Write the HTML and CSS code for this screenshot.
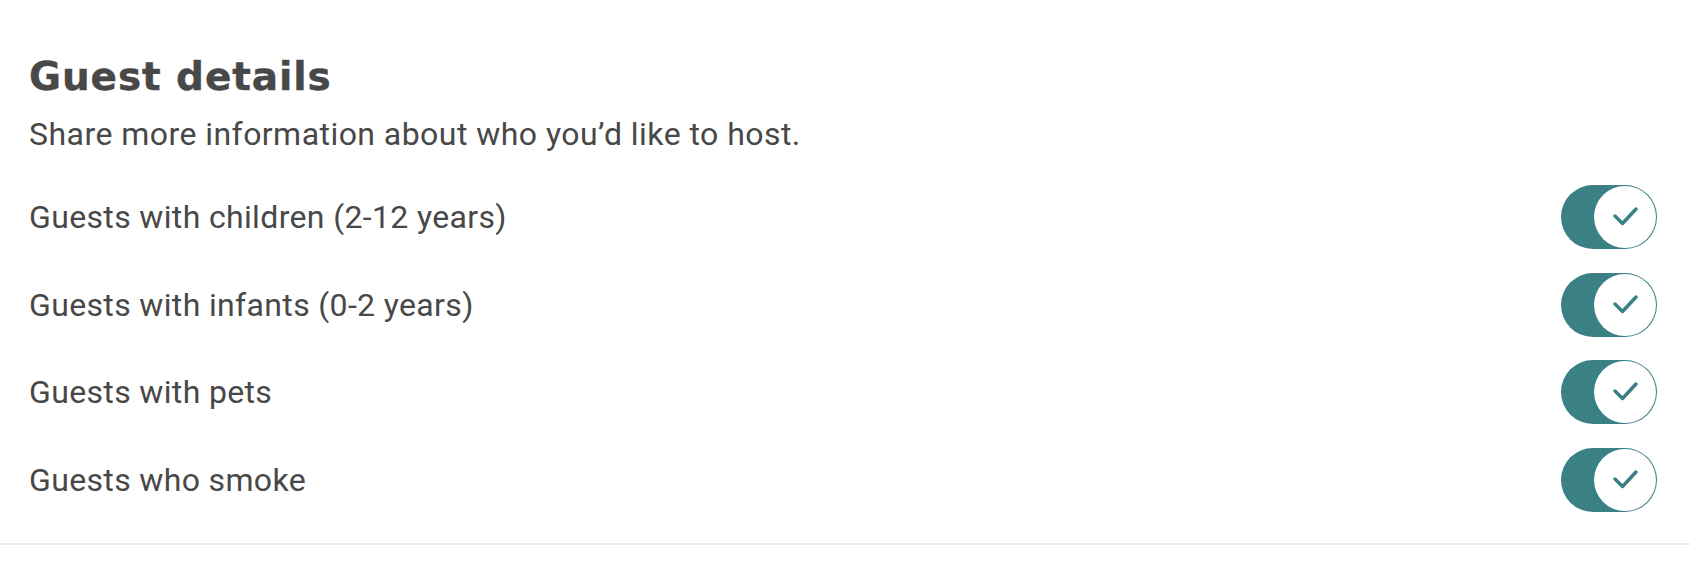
FILE: index.html
```html
<!DOCTYPE html>
<html lang="en">
<head>
    <meta charset="UTF-8">
    <meta name="viewport" content="width=device-width, initial-scale=1.0">
    <title>Guest details</title>
    <link rel="stylesheet" href="styles.css">
</head>
<body>
<section class="sezione">
    <h2>Guest details</h2>
    <p class="sottotitolo">Share more information about who you’d like to host.</p>

    <div class="lista">
        <div class="riga">
            <span>Guests with children (2-12 years)</span>
            <button class="interruttore" role="switch" aria-checked="true">
                <span class="pallino">
                    <svg viewBox="0 0 62 62"><path d="M21 30 L28.5 37.5 L42 23"/></svg>
                </span>
            </button>
        </div>
        <div class="riga">
            <span>Guests with infants (0-2 years)</span>
            <button class="interruttore" role="switch" aria-checked="true">
                <span class="pallino">
                    <svg viewBox="0 0 62 62"><path d="M21 30 L28.5 37.5 L42 23"/></svg>
                </span>
            </button>
        </div>
        <div class="riga">
            <span>Guests with pets</span>
            <button class="interruttore" role="switch" aria-checked="true">
                <span class="pallino">
                    <svg viewBox="0 0 62 62"><path d="M21 30 L28.5 37.5 L42 23"/></svg>
                </span>
            </button>
        </div>
        <div class="riga">
            <span>Guests who smoke</span>
            <button class="interruttore" role="switch" aria-checked="true">
                <span class="pallino">
                    <svg viewBox="0 0 62 62"><path d="M21 30 L28.5 37.5 L42 23"/></svg>
                </span>
            </button>
        </div>
    </div>
</section>
<hr class="divisore">
</body>
</html>
```
FILE: styles.css
```css
body {
    margin: 0;
    font-family: Roboto, "Liberation Sans", sans-serif;
    color: #484848;
    background: #fff;
}

.sezione {
    padding: 55px 33px 0 29px;
}

h2 {
    margin: 0;
    font-family: "DejaVu Sans", sans-serif;
    font-size: 39px;
    font-weight: 700;
    letter-spacing: 0.9px;
    line-height: 44px;
    -webkit-text-stroke: 0.4px #484848;
}

.sottotitolo {
    margin: 15px 0 0;
    font-size: 32px;
    line-height: 40px;
    letter-spacing: 0.45px;
}

.lista {
    margin-top: 31px;
    display: flex;
    flex-direction: column;
    gap: 23.67px;
}

.riga {
    display: flex;
    align-items: center;
    justify-content: space-between;
    height: 64px;
    font-size: 32px;
    line-height: 40px;
    letter-spacing: 0.35px;
}

.interruttore {
    width: 96px;
    height: 64px;
    padding: 1px;
    border: none;
    border-radius: 32px;
    background-color: #3a8085;
    display: flex;
    justify-content: flex-end;
    cursor: pointer;
}

.pallino {
    width: 62px;
    height: 62px;
    border-radius: 50%;
    background: #fff;
    display: block;
}

.pallino svg {
    width: 62px;
    height: 62px;
    display: block;
    fill: none;
    stroke: #3a8085;
    stroke-width: 3.5;
    stroke-linecap: round;
    stroke-linejoin: round;
}

.divisore {
    margin: 31px 0 0;
    border: none;
    height: 2px;
    background-color: #ebebeb;
}
```
